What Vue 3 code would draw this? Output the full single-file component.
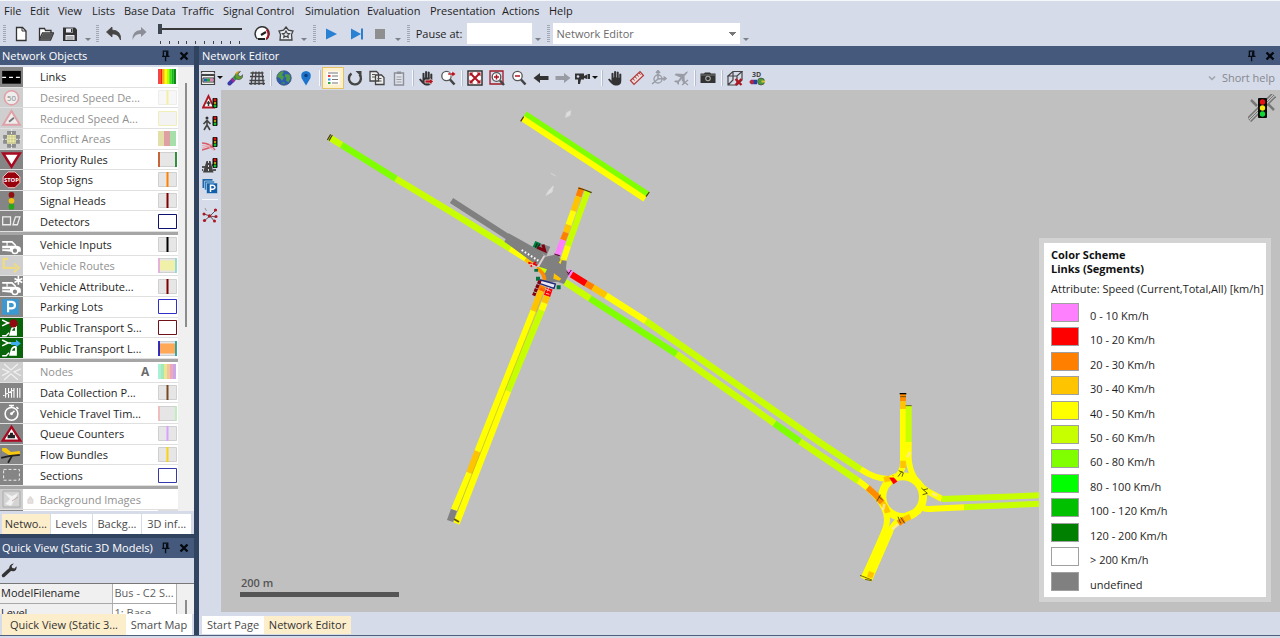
<script setup>
import { ref } from 'vue'

const menus = ['File', 'Edit', 'View', 'Lists', 'Base Data', 'Traffic', 'Signal Control', 'Simulation', 'Evaluation', 'Presentation', 'Actions', 'Help']
const view = ref('Network Editor')
const pauseAt = ref('')
const speed = ref(0)

const hand = '<path d="M1 9.500l1.500-1 2 2.200V3.200q1-1 2 0V7.500h.6V1.500q1-1 2 0v6h.6V2q1-1 2 0v5.700h.6V4q1-1 2 0v6.500q0 4.500-4 5H8Q5 15 1 9.500z" fill="#333"/>'
const lens = '<circle cx="6.500" cy="6" r="4.700" fill="#fff" stroke="#555" stroke-width="1.300"/><path d="M10 9.500l4.500 5" stroke="#444" stroke-width="2.600"/>'
const light = (x, y) => `<g transform="translate(${x} ${y})"><rect width="5" height="10" rx="1" fill="#111"/><circle cx="2.500" cy="2" r="1.400" fill="#e01010"/><circle cx="2.500" cy="5" r="1.200" fill="#b89a10"/><circle cx="2.500" cy="8" r="1.400" fill="#10c030"/></g>`
const icons = {
  new: '<path d="M3.500 1.500h6l3.500 3.500v9.500h-9.500z" fill="#fff" stroke="#333" stroke-width="1.300"/><path d="M9 1.500V5h4" fill="none" stroke="#333"/>',
  open: '<path d="M1.500 14V2.500h5l1 2h5.500V7M1.500 14l3-7h11l-3 7z" fill="#fff" stroke="#333" stroke-width="1.300"/><path d="M2 13.500l3-6h10l-2.500 6z" fill="#555"/>',
  save: '<path d="M1 1.500h12l2 2V15H1z" fill="#333"/><path d="M4 2.500h7v4H4zM3.500 9h9v5h-9z" fill="#e9ecf4"/><path d="M9 3h1.500v3H9z" fill="#333"/><path d="M4.500 11h7M4.500 13h7" stroke="#777"/>',
  undo: '<path d="M6 1L.5 6 6 11V8q6-1 8.500 6Q15.500 4.500 6 4z" fill="#444" stroke="#444" stroke-width=".8"/>',
  redo: '<path d="M10 1l5.500 5L10 11V8Q4 7 1.500 14 1 4.500 10 4z" fill="#8b8e96"/>',
  gauge: '<path d="M3.500 13A7 7 0 1 1 12 13.500" fill="#fff" stroke="#333" stroke-width="1.500"/><path d="M12.500 3.500a7 7 0 0 1 0 9.500" fill="none" stroke="#b01020" stroke-width="1.800"/><path d="M4 13h7M7 9l5-3" stroke="#222" stroke-width="2.200"/>',
  star: '<path d="M8 1l2.500 3.200L15 5l-1.500 3.500.5 5.500H2l.5-5.500L1 5l4.500-.8z" fill="#e7eaf2" stroke="#444" stroke-width="1.300"/><path d="M8 5l1.200 2.300 2.300.3-1.700 1.600.4 2.300L8 10.300l-2.200 1.200.4-2.300-1.700-1.600 2.300-.3z" fill="none" stroke="#444" stroke-width="1.200"/>',
  play: '<path d="M3 2.500l11 5.500-11 5.500z" fill="#2a80d2"/>',
  step: '<path d="M2 2.500L12 8 2 13.500z" fill="#2a80d2"/><path d="M13 2.500v11" stroke="#2a80d2" stroke-width="2"/>',
  stop: '<path d="M3 3h10v10H3z" fill="#8f8f8f"/>',
  list: '<path d="M1.500 3.500v-2h13v2M1.500 5h13v9.500h-13z" fill="#eee" stroke="#444" stroke-width="1.200"/><path d="M1 5h14" stroke="#444" stroke-width="2"/><path d="M3 8h11v4H3z" fill="#eee" stroke="#333"/><path d="M4 10h3" stroke="#16b" stroke-width="2.500"/><path d="M7 10h3" stroke="#2a2" stroke-width="2.500"/><path d="M10 10h3" stroke="#e7b" stroke-width="2.500"/>',
  wrenchColor: '<path d="M2.500 13.500l3.200-3.200" stroke="#3a3aa8" stroke-width="4" stroke-linecap="round"/><path d="M5 11l2-2" stroke="#9a2a9a" stroke-width="4"/><path d="M7 9l2.500-2.500" stroke="#22a04a" stroke-width="4"/><path d="M13.500 1.500L11 4l1 2 2 .6 1.700-2q.5 4-3 5-4 .5-5-2.500.5-5 5.800-5.600z" fill="#5f9d30" stroke="#444" stroke-width=".6"/><path d="M8.500 4l3-2.500" stroke="#e0a020" stroke-width="1.500"/>',
  grid: '<path d="M4 1.500L2 15M7 1.500L6 15M10 1.500V15M13 1.500L14.500 15M1.500 3h13M1 6.500h14M.5 10.500h15M0 13.500h16" stroke="#444" stroke-width="1.300"/>',
  globe: '<circle cx="8" cy="8" r="7.300" fill="#2e5cae" stroke="#45507a" stroke-width=".7"/><path d="M3 3q4-3 5-1L6 5l2 2-2 4-2-3-3-1zM9.500 4l4 .5 1 4-2 4-2.500-2 .5-3-2-1zM5 13l3-1 1 2z" fill="#4d9a48"/>',
  pin: '<path d="M8 15.500L3.500 8Q2 1.500 8 1q6 .5 4.500 7z" fill="#1c74cc"/><circle cx="8" cy="5.500" r="1.800" fill="#0d3f80"/>',
  legend: '<path d="M1.500 1.500h13v13h-13z" fill="#fff"/><path d="M3 3h10M7 6h6M7 9.500h6M7 13h6" stroke="#777" stroke-width="1.100"/><path d="M3 6h2.500" stroke="#e33" stroke-width="2"/><path d="M3 9.500h2.500" stroke="#2a9ae0" stroke-width="2"/><path d="M3 13h2.500" stroke="#3a3" stroke-width="2"/>',
  refresh: '<path d="M4.500 3.500a6 6 0 1 0 8 1" fill="none" stroke="#444" stroke-width="2.400"/><path d="M8.500 1h6v6z" fill="#444"/>',
  copy: '<path d="M1 1.500h6.500l2 2V11H1zM6.500 5h6l2.500 2.500V14.500h-8.500z" fill="#eee" stroke="#444" stroke-width="1.300"/><path d="M3 4.500h3M3 7h3M8.500 8.500h4M8.500 11h4" stroke="#555"/>',
  paste: '<path d="M3.500 3h9v12h-9z" fill="#dfe2ea" stroke="#8c8f97" stroke-width="1.400"/><path d="M6 1.500h4V4H6z" fill="#8c8f97"/><path d="M5.500 7h5M5.500 9.500h5M5.500 12h5" stroke="#9a9da5"/>',
  handSync: hand + '<path d="M7 10h5V8.500l3.500 3-3.500 3V13H7z" fill="#b01522" stroke="#fff" stroke-width=".6"/>',
  lensSync: lens + '<path d="M8 3h4V1l4 3-4 3V5H8z" fill="#b01522" stroke="#fff" stroke-width=".5"/>',
  fit: '<path d="M1 1h14v14H1z" fill="#fff" stroke="#333" stroke-width="1.500"/><path d="M2.500 2.500h4L2.500 6.500zM13.500 2.500v4l-4-4zM2.500 13.500v-4l4 4zM13.500 13.500h-4l4-4z" fill="#b01522"/><path d="M4 4l8 8M12 4l-8 8" stroke="#b01522" stroke-width="2"/>',
  lensRect: '<path d="M1 1h13v13H1z" fill="none" stroke="#a01825" stroke-width="1.300"/><circle cx="7.500" cy="7" r="4.300" fill="#fff" stroke="#555" stroke-width="1.300"/><path d="M7.500 4.500v5M5 7h5" stroke="#b01522" stroke-width="1.500"/><path d="M11 10.500l4 4.500" stroke="#444" stroke-width="2.500"/>',
  lensOut: lens + '<path d="M4 6h5" stroke="#b01522" stroke-width="1.500"/>',
  left: '<path d="M.5 8L7 3v3h8.500v4H7v3z" fill="#333"/>',
  right: '<path d="M15.500 8L9 3v3H.5v4H9v3z" fill="#999ca4"/>',
  video: '<path d="M0 3.500h9v6H0zM9 6l3-1.500v4.500L9 8zM12.500 4h2.500v5h-2.500zM3 9.500h3L5 14H3z" fill="#333"/><circle cx="3" cy="6.500" r="1.300" fill="#d6dbe9"/>',
  hand,
  ruler: '<path d="M1.500 10.500L11 1.500l3.500 4-9.500 9z" fill="#ecdcdc" stroke="#b33a3a" stroke-width="1.200"/><path d="M4 8.500l1.500 2M6 6.500l1.500 2M8 4.500l1.500 2M10 3l1.500 1.700" stroke="#a33"/>',
  compass: '<path d="M7 1v8l7-.5M7 9l-6 5M5 3l2-2.500L9 3M12.500 6.500l2.500 2-2.500 2" fill="none" stroke="#999ca4" stroke-width="1.500"/><circle cx="7" cy="9" r="4" fill="none" stroke="#999ca4" stroke-width="1.300"/>',
  plane: '<path d="M15 1.500Q13 1 11 4L3 3.500 1.500 5l6 2.500-2.500 3H2l-1 1 3 1.200L5 15l1-1v-2l3-3 1.500 5.500 1.500-1-.5-7.500q3-3 3.500-4.500z" fill="#999ca4"/><path d="M9 10l6 5M15 10l-6 5" stroke="#999ca4" stroke-width="1.300"/>',
  photo: '<path d="M.5 3.500H4l1-1h5l1 1h4.500v9.500H.5z" fill="#333"/><circle cx="8" cy="8.500" r="2.800" fill="#aaa"/><circle cx="8" cy="8.500" r="1.700" fill="#333"/><path d="M1 5h14" stroke="#888" stroke-width=".8"/>',
  cube: '<path d="M1 6l5-4.500h9L10 6zM1 6v9h9V6M15 1.500V10l-5 5M1 15l5-5V1.500" fill="none" stroke="#444" stroke-width="1.200"/><path d="M8.500 9l6 6M14.500 9l-6 6" stroke="#b01522" stroke-width="2.300"/>',
  three: '<text x="3" y="7" font-family="Open Sans" font-size="7" font-weight="700" fill="#444">3D</text><path d="M2 12h3" stroke="#7a2a9a" stroke-width="4.500"/><path d="M5 12h3" stroke="#2240a0" stroke-width="4.500"/><circle cx="12" cy="11.500" r="3.500" fill="#4a9a3a" stroke="#444" stroke-width=".7"/><path d="M12.500 11.500h3.500" stroke="#e0c030" stroke-width="2"/><circle cx="2.500" cy="12" r="2" fill="#b02a3a"/>',
  sWarn: '<path d="M6.500 2L1 13.500h11z" fill="#fff" stroke="#b01522" stroke-width="1.800"/><path d="M6.500 7v5M4.500 9h4" stroke="#333" stroke-width="1.500"/>' + light(10.500, 4),
  sPed: '<circle cx="5" cy="3" r="1.500" fill="#333"/><path d="M5 5v5l3 5M5 10l-3 5M1.500 9L5 5.500 8.500 9" fill="none" stroke="#444" stroke-width="1.600"/>' + light(10.500, 1),
  sLinks: '<path d="M0 7q8 0 13 7M0 14q7-2 14-5" fill="none" stroke="#d85a68" stroke-width="1.500"/><path d="M0 9.500q8 0 11 5M0 12l13-5" fill="none" stroke="#f0a0a8" stroke-width="1"/>' + light(10.500, 1),
  sRoad: '<path d="M4.500 4h4l3 11.500H1z" fill="#444"/><path d="M6.500 4v11" stroke="#ddd" stroke-dasharray="2 2"/><path d="M0 10h3M10 8h3M0 13h1M11 13h3" stroke="#555" stroke-width="2"/>' + light(10.500, 1),
  sPark: '<path d="M.5 1h10v9H.5z" fill="#2266a8"/><path d="M2.500 3h10v9h-10z" fill="#2e7abc" stroke="#cfe0f0" stroke-width=".6"/><path d="M4.500 5h11v10.500h-11z" fill="#145fa8" stroke="#cfe0f0" stroke-width=".6"/><path d="M8.500 14V7.200h2.500q2 .3 2 2t-2 2H9" fill="none" stroke="#fff" stroke-width="1.500"/>',
  sNodes: '<path d="M2 7l6 2 6-6M8 9l6 1M8 9l-6 5M8 9l5 6" stroke="#555" fill="none"/><g fill="#b01522"><circle cx="2" cy="7" r="1.500"/><circle cx="13.500" cy="3" r="1.600"/><circle cx="14" cy="9.500" r="1.500"/><circle cx="2.500" cy="13.500" r="1.600"/><circle cx="12.500" cy="14" r="1.500"/><circle cx="7.500" cy="9" r="1.700"/></g><path d="M3 1l1.500 3" stroke="#999"/>',
  wrench: '<path d="M2.500 13.500l6-5.500" stroke="#333" stroke-width="3.500" stroke-linecap="round"/><path d="M13 1.500L10.500 4l.8 2 2.200.5 2-2.200q.8 4-2.500 5-4 .5-5-2.500.3-4.800 5-5.300z" fill="#333"/>',
  pinned: '<path d="M5 2.500h5v6H5zM3.500 8.500h8.500M7.500 8.500V14" fill="none" stroke="#080c14" stroke-width="1.500"/><path d="M9 3v5" stroke="#080c14" stroke-width="2"/>',
  close: '<path d="M4 4l8 8M12 4l-8 8" stroke="#05080e" stroke-width="2.700"/>',
}

const toolbar = [
  { id: 'list', t: 'Graphic parameters', drop: true }, { id: 'wrenchColor', t: 'Edit parameters' }, { id: 'grid', t: 'Wireframe' }, 0,
  { id: 'globe', t: 'Background map' }, { id: 'pin', t: 'Map location' }, 0,
  { id: 'legend', t: 'Legend', on: true }, { id: 'refresh', t: 'Refresh' }, { id: 'copy', t: 'Copy' }, { id: 'paste', t: 'Paste' }, 0,
  { id: 'handSync', t: 'Synchronize pan' }, { id: 'lensSync', t: 'Synchronize zoom' }, 0,
  { id: 'fit', t: 'Show entire network' }, { id: 'lensRect', t: 'Zoom in' }, { id: 'lensOut', t: 'Zoom out' }, { id: 'left', t: 'Previous view' }, { id: 'right', t: 'Next view' }, { id: 'video', t: 'Camera', drop: true }, 0,
  { id: 'hand', t: 'Pan' }, { id: 'ruler', t: 'Measure' }, { id: 'compass', t: 'Rotate' }, { id: 'plane', t: 'Fly' }, 0,
  { id: 'photo', t: 'Screenshot' }, 0, { id: 'cube', t: '3D mode' }, { id: 'three', t: '3D parameters' },
]
const sideTools = ['sWarn', 'sPed', 'sLinks', 'sRoad', 'sPark', 'sNodes']

// Row swatches, drawn on a 19 x 15 grid
const box = (stroke, fill = '#fff') => `<path d="M.5 .5h18v14H.5z" fill="${fill}" stroke="${stroke}"/>`
const bar = (c, edge = '#d0d0d0', bg = '#e6e6e6') => box(edge, bg) + `<path d="M9.500 0v15" stroke="${c}" stroke-width="2"/>`
const strips = (cs) => cs.map((c, i) => `<path d="M${(i * 18) / cs.length} 0h${18 / cs.length}v15h-${18 / cs.length}z" fill="${c}"/>`).join('')
const ends = (a, b, fill) => `<path d="M1 .5h17v14H1z" fill="#e6e6e6" stroke="#d0d0d0"/><path d="M1 2.500h17v10H1z" fill="${fill}"/><path d="M1 0v15" stroke="${a}" stroke-width="1.700"/><path d="M18 0v15" stroke="${b}" stroke-width="1.700"/>`
const car = '<path d="M2 7h10l4 4" fill="none" stroke="#fff" stroke-width="1.600"/><path d="M7 7v4" stroke="#fff" stroke-width="1.200"/><path d="M2 11h14q5 .5 5 3v3H2z" fill="#fff"/><path d="M2 14h8" stroke="#858585" stroke-width="1"/><circle cx="15" cy="16" r="2.900" fill="#858585" stroke="#fff" stroke-width="1.500"/><path d="M2 16v3h9l-1-2z" fill="#858585"/>'
const tram = '<path d="M2 2l6 3-6 3M8 5h4" fill="none" stroke="#fff" stroke-width="1.600"/><path d="M9 18l2-7q1.500-3 5-3h1v10z" fill="#fff"/><path d="M12 13q.5-2.500 3-3v3z" fill="#085808"/><path d="M2 18h4l3-3" stroke="#fff" stroke-width="1.500" fill="none"/>'

const groups = [
  { size: 8, rows: [
    { n: 'Links', i: '<path d="M2 4h19v13H2z" fill="#000"/><path d="M2 10.500h19" stroke="#fff" stroke-width="1.300" stroke-dasharray="4 3"/>', s: strips(['#f04848', '#ff2400', '#ffb000', '#ffff00', '#b8ff00', '#38e800', '#10b818', '#108818']) },
    { n: 'Desired Speed De...', off: 1, i: '<circle cx="11.500" cy="10" r="7.200" fill="#eee" stroke="#e0a0a8" stroke-width="1.600"/><text x="11.500" y="13" text-anchor="middle" font-family="Open Sans" font-size="8" fill="#888">50</text>', s: bar('#f4f0a0', '#ededed', '#f7f7f7') },
    { n: 'Reduced Speed A...', off: 1, i: '<path d="M11.500 3L3 17h17z" fill="#eee" stroke="#e0a0a8" stroke-width="2"/><path d="M9 14l5-4" stroke="#777" stroke-width="2"/>', s: box('#f0efb8', '#f3f3f3') },
    { n: 'Conflict Areas', off: 1, i: '<path d="M3 6h4V2h9v4h4v9h-4v4H7v-4H3z" fill="#8d8d8d"/><path d="M7 6h9v9H7z" fill="#f0f0a8"/><path d="M11.500 0v6M11.500 15v5M2 10.500h5M16 10.500h5" stroke="#eee" stroke-dasharray="2 1"/><path d="M7 8h9M7 11h9M7 14h9M9 6v9M12 6v9M15 6v9" stroke="#c0bc90" stroke-width=".7"/>', s: strips(['#e3dfa8', '#dfa0a4', '#a6dfaa']) },
    { n: 'Priority Rules', i: '<path d="M3 3.500h17l-8.500 13.500z" fill="#fff" stroke="#a80820" stroke-width="2.500"/>', s: ends('#c05018', '#108020', '#e6e6e6') },
    { n: 'Stop Signs', i: '<path d="M8 2h7l5 5v6l-5 5H8l-5-5V7z" fill="#98000c" stroke="#f0c8c8"/><text x="11.500" y="12.500" text-anchor="middle" font-family="Open Sans" font-size="6" font-weight="700" fill="#fff">STOP</text>', s: bar('#ff8000') },
    { n: 'Signal Heads', i: '<path d="M9 1h5v18H9z" fill="#777"/><circle cx="11.500" cy="4" r="2.900" fill="#901010"/><circle cx="11.500" cy="10" r="2.900" fill="#f0c010"/><circle cx="11.500" cy="16" r="2.900" fill="#28a818"/>', s: bar('#800000') },
    { n: 'Detectors', i: '<path d="M2.500 6h8v8h-8zM15.500 6H20l-2.500 8H13z" fill="none" stroke="#eee" stroke-width="1.300"/>', s: box('#101070') },
  ] },
  { size: 6, rows: [
    { n: 'Vehicle Inputs', i: car, s: bar('#000') },
    { n: 'Vehicle Routes', off: 1, i: '<path d="M8 3H3.500v9H16" fill="none" stroke="#f0dc80" stroke-width="2.300"/><path d="M14 7.500l5 4.500-5 4.500" fill="none" stroke="#f0dc80" stroke-width="2"/>', s: ends('#e4a8dc', '#88d8d0', '#f0f0a8') },
    { n: 'Vehicle Attribute...', i: car + '<path d="M18.500 0v9M14.500 2.500l8 4M22.500 2.500l-8 4" stroke="#fff" stroke-width="1.700"/>', s: bar('#800000') },
    { n: 'Parking Lots', i: '<path d="M2 2h17v16H2z" fill="#3c98d0"/><path d="M8 15.500V5h4q3 .3 3 3.300T12 11.500H8" fill="none" stroke="#fff" stroke-width="2.200"/>', s: box('#3030c8') },
    { n: 'Public Transport S...', green: 1, i: tram + '<circle cx="13.500" cy="5.500" r="4.200" fill="#900810"/>', s: box('#701018') },
    { n: 'Public Transport L...', green: 1, i: tram + '<path d="M11 4h5V1.500l5 4-5 4V7h-5z" fill="#40b0f0"/>', s: ends('#1010c0', '#10a0a0', '#ffa858') },
  ] },
  { size: 6, rows: [
    { n: 'Nodes', off: 1, mark: 'A', i: '<path d="M2 7l7 3-7 4M21 7l-7 3 7 4M4 2l7 6 7-6M4 18l7-6 7 6" fill="none" stroke="#f0f0f0" stroke-width="1.300"/>', s: strips(['#a8f0d8', '#a8e8b8', '#e8e890', '#f4c4a0', '#f0a8b8', '#c8a8e8']) },
    { n: 'Data Collection P...', i: '<path d="M5.500 5v10M8.500 5v10M11.500 5v10M14 5v10M17.500 5v10M20 5v10M3 13l11-6" stroke="#fff" stroke-width="1.100"/>', s: bar('#784820') },
    { n: 'Vehicle Travel Tim...', i: '<circle cx="11.500" cy="11" r="6.500" fill="none" stroke="#fff" stroke-width="1.600"/><path d="M9 2.500h5M11.500 2v3M16.500 4l2 2M11.500 11l3-3" stroke="#fff" stroke-width="1.600"/><circle cx="11.500" cy="11" r="1.500" fill="#fff"/>', s: ends('#f0b8b8', '#b8f0b8', '#e6e6e6') },
    { n: 'Queue Counters', i: '<path d="M11.500 3L2.500 17h18z" fill="#fff" stroke="#a80820" stroke-width="2.300"/><path d="M7.500 11h2.500V9h3v2h2v3.500H7.500z" fill="#222"/>', s: bar('#d8a0ff') },
    { n: 'Flow Bundles', i: '<path d="M2 3h4l5 4 9-1v4l-10 1-8-5z" fill="#f8c810"/><path d="M1 13l9-2 10-1M8 18l4-7" fill="none" stroke="#222" stroke-width="1.800"/>', s: bar('#ffd010') },
    { n: 'Sections', i: '<path d="M3.500 4.500h16v11h-16z" fill="none" stroke="#eee" stroke-dasharray="3 2"/>', s: box('#3838a8') },
  ] },
]
const bgIcon = '<path d="M3 2h17v16H3z" fill="#d4d4d4" stroke="#aaa"/><path d="M5 4l7 3 6-3-4 8-3 5-6-2 5-5z" fill="#f2f2f2"/><path d="M12 12l6-4" stroke="#c0a8a8"/>'

const legend = [
  ['#ff80ff', '0 - 10 Km/h'], ['#ff0000', '10 - 20 Km/h'], ['#ff8000', '20 - 30 Km/h'], ['#ffc400', '30 - 40 Km/h'],
  ['#ffff00', '40 - 50 Km/h'], ['#c8ff00', '50 - 60 Km/h'], ['#80ff00', '60 - 80 Km/h'], ['#00ff00', '80 - 100 Km/h'],
  ['#00c000', '100 - 120 Km/h'], ['#008000', '120 - 200 Km/h'], ['#ffffff', '> 200 Km/h'], ['#808080', 'undefined'],
]

// Link segments: stroke width, then start point followed by [colour, x, y] steps
const P = '#ff80ff', R = '#ff0000', O = '#ff8000', A = '#ffc400', Y = '#ffff00', L = '#c8ff00', G = '#80ff00', U = '#808080'
const links = [
  [6, 525, 114, [G, 648, 194.500]],
  [6, 522.500, 118.500, [Y, 645, 199]],
  [6.500, 329.5, 137.500, [L, 341.7, 145], [G, 396, 178.700], [L, 452, 212.500], [L, 510, 248.500], [Y, 526, 258.500], [A, 534, 263.500]],
  [6, 451.500, 200.500, [U, 508, 237]],
  [6, 581.500, 188, [O, 578.500, 196.500], [A, 573.500, 211], [Y, 568.500, 225], [A, 566, 232.500], [O, 563, 240], [P, 557.500, 255]],
  [6, 588, 190.500, [L, 568, 246], [Y, 562.500, 263]],
  [6.500, 567, 271.500, [P, 571.500, 274.500], [R, 586, 283.500], [O, 593, 287.500], [A, 606, 295.500], [Y, 646, 321], [L, 820, 442.500], [L, 860.700, 469.500]],
  [6.500, 565, 282, [L, 590, 298.500], [G, 676.500, 354], [L, 774.500, 423.500], [G, 800, 441.500], [L, 858.500, 481]],
  [6.500, 543, 286, [O, 541, 291], [A, 533.500, 311], [Y, 477.500, 451.500], [A, 469.500, 473], [Y, 454, 510], [U, 450, 521]],
  [6.500, 549.500, 288.500, [R, 547, 296], [A, 544.500, 303], [Y, 541.500, 310.500], [L, 508, 391], [Y, 456.500, 523.500]],
]
const segments = links.flatMap(([w, x, y, ...steps]) => {
  let px = x, py = y
  return steps.map(([c, nx, ny]) => {
    const s = { w, c, x1: px, y1: py, x2: nx, y2: ny }
    px = nx; py = ny
    return s
  })
})
</script>

<template>
  <div class="app">
    <nav class="menu" aria-label="Main menu">
      <button v-for="m in menus" :key="m">{{ m }}</button>
    </nav>

    <div class="bar">
      <i class="grip"></i>
      <button aria-label="New"><svg class="ic" viewBox="0 0 16 16" v-html="icons.new"></svg></button>
      <button aria-label="Open"><svg class="ic" viewBox="0 0 16 16" v-html="icons.open"></svg></button>
      <button aria-label="Save"><svg class="ic" viewBox="0 0 16 16" v-html="icons.save"></svg></button>
      <i class="more"></i>
      <i class="grip"></i>
      <button aria-label="Undo"><svg class="ic" viewBox="0 0 16 16" v-html="icons.undo"></svg></button>
      <button aria-label="Redo"><svg class="ic" viewBox="0 0 16 16" v-html="icons.redo"></svg></button>
      <div class="speed">
        <input v-model="speed" type="range" min="0" max="10" aria-label="Simulation speed" />
        <div class="ticks"><i v-for="n in 10" :key="n"></i></div>
      </div>
      <button aria-label="Maximum speed"><svg class="ic" viewBox="0 0 16 16" v-html="icons.gauge"></svg></button>
      <button aria-label="Quick mode"><svg class="ic" viewBox="0 0 16 16" v-html="icons.star"></svg></button>
      <i class="more"></i>
      <i class="grip"></i>
      <button aria-label="Run"><svg class="ic" viewBox="0 0 16 16" v-html="icons.play"></svg></button>
      <button aria-label="Single step"><svg class="ic" viewBox="0 0 16 16" v-html="icons.step"></svg></button>
      <button aria-label="Stop"><svg class="ic" viewBox="0 0 16 16" v-html="icons.stop"></svg></button>
      <i class="more"></i>
      <i class="grip"></i>
      <label for="pause">Pause at:</label>
      <input id="pause" v-model="pauseAt" class="pause" type="text" />
      <i class="more"></i>
      <i class="grip"></i>
      <select v-model="view" class="view" aria-label="Active window"><option>Network Editor</option></select>
      <i class="more"></i>
    </div>

    <div class="work">
      <aside class="left">
        <header class="title">
          <span>Network Objects</span>
          <button aria-label="Pin panel"><svg class="ic" viewBox="0 0 16 16" v-html="icons.pinned"></svg></button>
          <button aria-label="Close panel"><svg class="ic" viewBox="0 0 16 16" v-html="icons.close"></svg></button>
        </header>
        <div class="objects">
          <div class="list">
            <ul v-for="(g, gi) in groups" :key="gi" :class="'g' + g.size">
              <li v-for="r in g.rows" :key="r.n" :class="{ off: r.off, green: r.green }">
                <svg class="obj" viewBox="0 0 23 20" v-html="r.i"></svg>
                <button>{{ r.n }}</button>
                <b class="mark">{{ r.mark }}</b>
                <svg class="sw" viewBox="0 0 19 15" v-html="r.s"></svg>
              </li>
            </ul>
            <ul class="last">
              <li class="off">
                <svg class="obj" viewBox="0 0 23 20" v-html="bgIcon"></svg>
                <button><svg class="lock" viewBox="0 0 8 10"><path d="M1 4.500h6v5H1zM2.500 4.500v-2q1.500-2 3 0v2" fill="#e6e0e0" stroke="#ddd5d5" /></svg>Background Images</button>
              </li>
              <li class="cut"><i class="obj"></i><i class="stub"></i></li>
            </ul>
          </div>
          <div class="scroll"><i></i></div>
        </div>
        <div class="tabs four">
          <button class="on">Netwo...</button><button>Levels</button><button>Backg...</button><button>3D inf...</button>
        </div>
        <header class="title second">
          <span>Quick View (Static 3D Models)</span>
          <button aria-label="Pin panel"><svg class="ic" viewBox="0 0 16 16" v-html="icons.pinned"></svg></button>
          <button aria-label="Close panel"><svg class="ic" viewBox="0 0 16 16" v-html="icons.close"></svg></button>
        </header>
        <div class="qtools"><button aria-label="Configure"><svg class="ic" viewBox="0 0 16 16" v-html="icons.wrench"></svg></button></div>
        <div class="quick">
          <table>
            <tbody>
              <tr><th scope="row">ModelFilename</th><td>Bus - C2 S...</td></tr>
              <tr><th scope="row">Level</th><td>1: Base</td></tr>
            </tbody>
          </table>
          <div class="scroll small"><i></i></div>
        </div>
        <div class="tabs two">
          <button class="on">Quick View (Static 3...</button><button>Smart Map</button>
        </div>
      </aside>

      <main class="editor">
        <header class="title">
          <span>Network Editor</span>
          <button aria-label="Pin panel"><svg class="ic" viewBox="0 0 16 16" v-html="icons.pinned"></svg></button>
          <button aria-label="Close panel"><svg class="ic" viewBox="0 0 16 16" v-html="icons.close"></svg></button>
        </header>
        <div class="etools">
          <template v-for="(t, k) in toolbar" :key="k">
            <i v-if="!t" class="sep"></i>
            <button v-else :class="{ on: t.on, drop: t.drop }" :aria-label="t.t"><svg class="ic" viewBox="0 0 16 16" v-html="icons[t.id]"></svg></button>
          </template>
          <button class="help"><svg viewBox="0 0 8 6"><path d="M1 1.500l3 3 3-3" fill="none" stroke="#a0a4ae" stroke-width="1.500" /></svg>Short help</button>
        </div>
        <div class="stage">
          <div class="side">
            <button v-for="s in sideTools" :key="s" :class="s" :aria-label="s.slice(1)"><svg class="ic" viewBox="0 0 16 16" v-html="icons[s]"></svg></button>
          </div>
          <div class="canvas">
            <svg class="map" aria-label="Traffic network">
              <g transform="translate(-221 -90)">
                <line v-for="(s, k) in segments" :key="k" :x1="s.x1" :y1="s.y1" :x2="s.x2" :y2="s.y2" :stroke="s.c" :stroke-width="s.w" />
                <path d="M546.500 286L457 512" stroke="#a8a050" stroke-width=".5" />
                <!-- signalised junction -->
                <g transform="translate(310 100) scale(.33333)">
                  <path d="M583 425L596 400 690 452 706 470 745 462 752 480 770 482 768 508 779 520 762 552 742 545 705 548 686 500z" fill="#808080" />
                  <path d="M686 428l35 12-12 28-34-22z" fill="#808080" />
                  <path d="M668 440l8-17 16 7-8 18z" fill="#008040" />
                  <path d="M682 430l-6 12M690 432l-8 12" stroke="#083020" stroke-width="4" />
                  <path d="M682 442l22 10-5-18" fill="none" stroke="#800010" stroke-width="9" />
                  <path d="M635 450l50 32" stroke="#fff" stroke-width="6" stroke-dasharray="5 6" />
                  <path d="M703 468l-20 34" stroke="#d8d0d0" stroke-width="6" />
                  <path d="M655 488l26 8M662 500l16-14" stroke="#f00000" stroke-width="5" />
                  <path d="M660 492l16 6M666 488l2 10" stroke="#fff" stroke-width="2" />
                  <path d="M687 500l24 8-6 12-20-12z" fill="#c8ff00" />
                  <path d="M680 505q22 10 24 35" fill="none" stroke="#ff8c00" stroke-width="11" />
                  <path d="M732 520l22 16-6 6-18-6z" fill="#ffc400" />
                  <path d="M758 470l-6 22-6-4z" fill="#ffe000" />
                  <path d="M673 507h11v8h-11zM678 530h12v12h-12zM740 556h12v12h-12z" fill="#087040" />
                  <path d="M692 540l44 12-4 13-42-14z" fill="#ece8f4" stroke="#202878" stroke-width="4" />
                  <path d="M690 542l-10 22-9 23" fill="none" stroke="#800010" stroke-width="10" stroke-dasharray="11 2" />
                  <path d="M690 566l14 5" stroke="#ff6000" stroke-width="8" />
                  <path d="M706 566l16 8M712 574l4-12M708 580l10 3" stroke="#ffd8d8" stroke-width="2.500" />
                  <path d="M733 462l18 6M774 524l10-14M770 516l8 6" stroke="#603" stroke-width="3" />
                  <path d="M805 264l20 6M825 270l20 8M52 120l10-17M57 122l10-17M632 64l9-14M1008 290l10-14" stroke="#4a3810" stroke-width="3.500" />
                  <path d="M767 52l3-14 12-6-2 14zM723 220l14 8M708 286l8-14 14-14-4 18z" fill="#dedede" stroke="#d8d8d8" stroke-width="3" />
                </g>
                <path d="M454 519l5 3" stroke="#665500" stroke-width="2" />
                <!-- roundabout -->
                <g transform="translate(820 380) scale(.33333)" fill="none">
                  <path d="M122 268Q165 297 205 297" stroke="#ff0" stroke-width="18" />
                  <path d="M249 87V245Q250 270 235 285" stroke="#ff0" stroke-width="18" />
                  <path d="M266 185V235Q270 300 325 335L366 357" stroke="#ff0" stroke-width="18" />
                  <path d="M300 378Q310 390 340 386L432 382" stroke="#ff0" stroke-width="18" />
                  <path d="M115 302Q210 370 200 430 198 455 130 596" stroke="#ff0" stroke-width="18" />
                  <path d="M300 392Q230 410 209 455L147 600" stroke="#ff0" stroke-width="18" />
                  <path d="M204 450L139 598" stroke="#ff0" stroke-width="34" />
                  <circle cx="248" cy="350" r="61" stroke="#ff0" stroke-width="24" />
                  <path d="M266 77V186M365 357L660 346M432 382L660 371" stroke="#c8ff00" stroke-width="18" />
                  <path d="M249 40V64M143 323Q170 345 187 368M235 430l18-12" stroke="#ff8c00" stroke-width="18" />
                  <path d="M249 64V87M249 242V264M187 368q12 15 16 30M192 299l18-4M253 418l18-8M155 576l-6 17" stroke="#ffc400" stroke-width="17" />
                  <path d="M214 303l12-8" stroke="#f00" stroke-width="23" />
                  <path d="M232 300l-10-10M208 290h14" stroke="#ff0" stroke-width="5" />
                  <path d="M193 372l-4 18M216 448l20-16M262 232l8-16M336 340l16 8" stroke="#ffe8a0" stroke-width="8" opacity=".8" />
                  <path d="M239 41h20" stroke="#000" stroke-width="4" />
                  <path d="M241 50h17M257 77h18M120 586l36 14M135 598l20 4" stroke="#54430a" stroke-width="2.500" />
                  <path d="M236 272l14 6-4 12M234 290l12-16M304 324l18 16-14 4M310 330l14-4M170 364l12-20M176 350l12 10M234 410l8 20M242 412l12 18" stroke="#3c3c08" stroke-width="2.500" />
                </g>
              </g>
            </svg>
            <svg class="badge" viewBox="0 0 28 28">
              <path d="M3 6l6 6M19 9l7 7" stroke="#777" stroke-width="2.500" />
              <path d="M1 26L26 1" stroke="#777" stroke-width="6" /><path d="M1 26L26 1" stroke="#c0c0c0" stroke-width="3" /><path d="M1 26L26 1" stroke="#777" stroke-width="1" />
              <rect x="10" y="4" width="9" height="20" rx="1" fill="#0a0a0a" />
              <circle cx="14.500" cy="8" r="2.700" fill="#e81010" /><circle cx="14.500" cy="14" r="2.700" fill="#f8e810" /><circle cx="14.500" cy="20" r="2.700" fill="#10d838" />
            </svg>
            <section class="legend">
              <h2>Color Scheme</h2>
              <h2>Links (Segments)</h2>
              <p>Attribute: Speed (Current,Total,All) [km/h]</p>
              <ul>
                <li v-for="l in legend" :key="l[1]"><i :style="{ background: l[0] }"></i><span>{{ l[1] }}</span></li>
              </ul>
            </section>
            <div class="scale">200 m</div>
          </div>
        </div>
        <div class="tabs docs"><button>Start Page</button><button class="on">Network Editor</button></div>
      </main>
    </div>
  </div>
</template>

<style>
body { margin: 0; overflow: hidden; }
</style>

<style scoped>
* { box-sizing: border-box; }
.app { height: 100vh; display: flex; flex-direction: column; background: #d6dbe9; border-top: 1px solid #f4f6fa; font: 11px/16px "Open Sans", "Noto Sans", sans-serif; color: #1e1e1e; }
button, input, select { font: inherit; color: inherit; border: 0; padding: 0; margin: 0; background: none; min-width: 0; white-space: nowrap; }
ul { list-style: none; margin: 0; padding: 0; }
.ic { width: 16px; height: 16px; display: block; }
.menu { flex: none; height: 20px; padding-left: 4px; display: grid; grid-template-columns: 26px 28px 34px 32px 58px 41px 82px 62px 63px 72px 47px auto; justify-content: start; align-items: center; }
.menu button { text-align: left; }
.bar { flex: none; height: 25px; display: grid; grid-template-columns: 8px 26px 24px 24px 12px 6px 27px 24px 98px 26px 22px 14px 6px 28px 24px 22px 14px 6px 56px 65px 12px 8px 188px 12px; align-items: center; justify-items: center; }
.grip { width: 3px; height: 17px; background: repeating-linear-gradient(#a2a7b4 0 1px, transparent 1px 2px); }
.more { align-self: end; margin-bottom: 5px; border: 3px solid transparent; border-top-color: #7c8088; border-bottom: 0; }
.speed { width: 84px; height: 20px; display: flex; flex-direction: column; justify-content: space-between; }
.speed input { appearance: none; width: 84px; height: 11px; background: linear-gradient(#383838, #383838) center / 100% 2px no-repeat; }
.speed input::-webkit-slider-thumb { appearance: none; width: 4px; height: 10px; background: #3c4650; }
.ticks { display: flex; justify-content: space-between; padding: 0 2px; }
.ticks i { width: 1px; height: 3px; background: #444; }
.pause { width: 65px; height: 21px; background: #fff; padding: 0 4px; }
.view { appearance: none; width: 187px; height: 21px; padding: 0 4px; color: #6a6a6a; background: linear-gradient(to bottom right, #777 50%, transparent 50%) right 3px center / 4px 4px no-repeat, linear-gradient(to bottom left, #777 50%, transparent 50%) right 7px center / 4px 4px no-repeat, #fff; }
.work { flex: 1; min-height: 0; display: grid; grid-template-columns: 194px minmax(0, 1fr); column-gap: 5px; background: #30435f; border-bottom: 1px solid #50607c; margin-bottom: 2px; }
.left { display: flex; flex-direction: column; min-height: 0; }
.title { flex: none; height: 19px; display: flex; align-items: center; background: #45597c; color: #fff; padding: 0 1px 0 2px; }
.title span { flex: 1; white-space: nowrap; }
.title button { width: 18px; display: grid; place-items: center; }
.title .ic { width: 14px; height: 14px; }
.editor .title { padding-left: 3px; }
.objects { flex: 1; min-height: 0; display: flex; background: #f0f0f0; border-top: 2px solid #d6dbe9; overflow: hidden; }
.list { flex: none; width: 178px; }
.list ul { display: grid; grid-auto-rows: 1fr; border-bottom: 3px solid #a6a6a6; }
.g8 { height: 168px; }
.g6 { height: 127px; }
.list .last { border: 0; display: block; }
.last li { height: 21px; }
.list li { display: grid; grid-template-columns: 23px 1fr 17px 20px; align-items: center; background: #fff; border-bottom: 1px solid #e0e0e0; min-height: 0; }
.obj { width: 23px; height: 100%; background: #858585; display: block; }
.off .obj { background: #cfcfcf; }
.green .obj { background: #086408; }
.list button { text-align: left; padding-left: 17px; line-height: 19px; display: flex; align-items: center; }
.off button { color: #919191; }
.last button { padding-left: 4px; }
.lock { width: 7px; height: 9px; margin-right: 6px; }
.mark { color: #6b6b6b; font-size: 12px; line-height: 16px; }
.sw { width: 19px; height: 15px; }
.list .cut { border: 0; }
.stub { width: 20px; height: 2px; background: #ddd; justify-self: end; grid-column: 4; align-self: start; }
.scroll { flex: 1; display: flex; justify-content: center; background: #f0f0f0; padding-top: 16px; }
.scroll i { width: 2px; height: 244px; background: #8c8c8c; }
.tabs { flex: none; display: flex; background: #d6dbe9; padding: 3px 2px 0; }
.tabs button { height: 20px; background: #fff; color: #4c4c4c; text-align: center; }
.tabs .on { background: #fdeecb; color: #333; }
.four button { flex: 42 1 0; border-right: 1px solid #d6dbe9; }
.four .on { flex-grow: 49; }
.four button:nth-child(3), .four button:nth-child(4) { flex-grow: 50; }
.second { margin-top: 4px; height: 20px; }
.qtools { flex: none; height: 25px; background: #d6dbe9; padding: 4px 1px; }
.quick { flex: none; height: 31px; display: flex; overflow: hidden; background: #fff; border-top: 1px solid #777; }
.quick table { width: 177px; height: 38px; border-collapse: collapse; table-layout: fixed; }
.quick th, .quick td { height: 19px; padding: 0 1px; text-align: left; font-weight: 400; white-space: nowrap; border-bottom: 1px solid #a8a8a8; border-right: 1px solid #b0b0b0; }
.quick th { width: 112px; background: #f0f0f0; }
.quick td { color: #606060; padding-left: 2px; }
.small i { height: 20px; }
.two button { flex: 66 1 0; }
.two .on { flex-grow: 124; }
.two { padding-top: 0; }
.two button { height: 21px; }
.editor { display: flex; flex-direction: column; min-width: 0; min-height: 0; background: #d6dbe9; }
.etools { flex: none; height: 25px; display: flex; align-items: center; }
.etools button { width: 22px; height: 22px; display: grid; place-items: center; }
.etools .on { background: #fdf0cc; box-shadow: inset 0 0 0 1px #e5c365; }
.etools .drop { width: 25px; display: flex; align-items: center; justify-content: center; gap: 1px; }
.drop::after { content: ""; border: 3px solid transparent; border-top-color: #111; border-bottom: 0; }
.sep { width: 1px; height: 16px; margin: 0 2px; background: #f6f8fc; box-shadow: 1px 0 #b8bdcb; }
.etools .help { width: auto; margin-left: auto; padding-right: 5px; display: flex; align-items: center; gap: 6px; color: #85888f; }
.help svg { width: 8px; height: 6px; }
.stage { flex: 1; min-height: 0; display: flex; }
.side { flex: none; width: 22px; padding-top: 1px; display: flex; flex-direction: column; align-items: center; }
.side button { height: 21px; display: grid; place-items: center; }
.side .sNodes { height: 27px; padding-top: 4px; margin-top: 3px; border-top: 1px solid #f6f8fc; }
.canvas { position: relative; flex: 1; min-width: 0; background: #c0c0c0; overflow: hidden; }
.map { position: absolute; inset: 0; width: 100%; height: 100%; }
.badge { position: absolute; right: 4px; top: 4px; width: 28px; height: 28px; }
.legend { position: absolute; right: 9px; bottom: 10px; width: 232px; height: 364px; padding: 5px 0 0 7px; background: #fff; border: 5px solid #d3d3d3; }
.legend h2 { margin: 0; font-size: 11px; line-height: 14px; font-weight: 700; color: #111; }
.legend p { margin: 5px 0 6px; line-height: 16px; white-space: nowrap; }
.legend ul { height: 293px; display: grid; grid-auto-rows: 1fr; }
.legend li { display: flex; gap: 11px; }
.legend i { width: 28px; height: 19px; border: 1px solid #a0a0a0; }
.legend span { padding-top: 5px; }
.scale { position: absolute; left: 19px; bottom: 15px; width: 159px; border-bottom: 5px solid #555; color: #555; font-weight: 600; line-height: 18px; padding-left: 1px; }
.docs { padding: 4px 3px 1px; height: 23px; }
.docs button { width: 62px; height: 18px; }
.docs .on { width: 87px; }
</style>
